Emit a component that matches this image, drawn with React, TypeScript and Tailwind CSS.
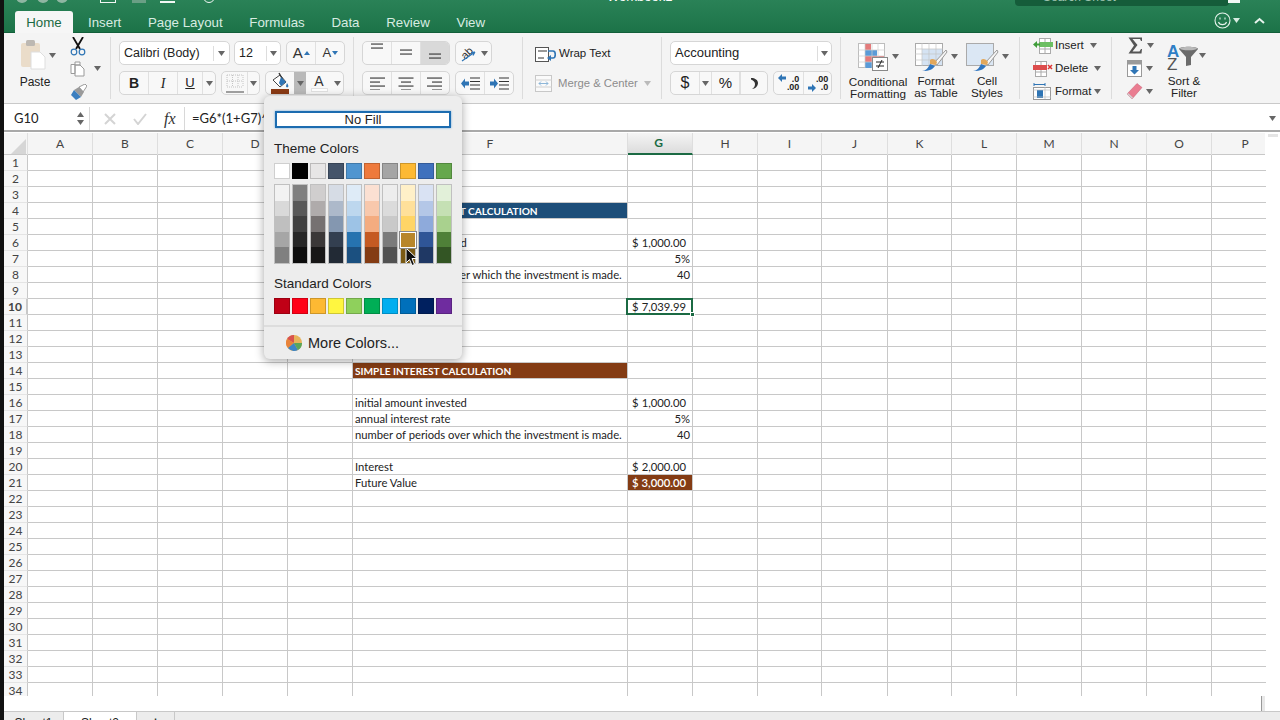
const ui = { fontFamily: '"Liberation Sans", Arial, sans-serif' };

const cols = ["A", "B", "C", "D", "E", "F", "G", "H", "I", "J", "K", "L", "M", "N", "O", "P"];

const themeTop = ["bg-[#ffffff]", "bg-[#000000]", "bg-[#e7e6e6]", "bg-[#44546a]", "bg-[#4f95d0]", "bg-[#ee7a3c]", "bg-[#a5a5a5]", "bg-[#fdb933]", "bg-[#3f71bd]", "bg-[#66a84d]"];
const shades = [
  ["bg-[#f2f2f2]", "bg-[#d9d9d9]", "bg-[#bfbfbf]", "bg-[#a6a6a6]", "bg-[#808080]"],
  ["bg-[#7f7f7f]", "bg-[#595959]", "bg-[#404040]", "bg-[#262626]", "bg-[#0d0d0d]"],
  ["bg-[#d0cece]", "bg-[#afabab]", "bg-[#767171]", "bg-[#3b3838]", "bg-[#181717]"],
  ["bg-[#d6dce5]", "bg-[#adb9ca]", "bg-[#8497b0]", "bg-[#333f50]", "bg-[#222a35]"],
  ["bg-[#deebf7]", "bg-[#bdd7ee]", "bg-[#9dc3e6]", "bg-[#2673b0]", "bg-[#1b5080]"],
  ["bg-[#fbe0d2]", "bg-[#f8c8ac]", "bg-[#f4ac80]", "bg-[#c55a22]", "bg-[#843c14]"],
  ["bg-[#ededed]", "bg-[#dbdbdb]", "bg-[#c9c9c9]", "bg-[#7b7b7b]", "bg-[#525252]"],
  ["bg-[#fff0c8]", "bg-[#ffe09a]", "bg-[#ffd566]", "bg-[#b8862a]", "bg-[#7a5a14]"],
  ["bg-[#d9e2f3]", "bg-[#b4c7e7]", "bg-[#8eaadb]", "bg-[#2f5597]", "bg-[#1f3864]"],
  ["bg-[#e2f0d9]", "bg-[#c5e0b4]", "bg-[#a9d18e]", "bg-[#4f8038]", "bg-[#335524]"],
];
const standard = ["bg-[#c00016]", "bg-[#ff0018]", "bg-[#fdb933]", "bg-[#fff640]", "bg-[#8fd05c]", "bg-[#00ae56]", "bg-[#00aeef]", "bg-[#0070bb]", "bg-[#00205f]", "bg-[#6f2c9f]"];

const Caret = ({ className = "" }: { className?: string }) => (
  <svg width="7" height="5" viewBox="0 0 7 5" className={`shrink-0 ${className}`}>
    <path d="M0 0h7L3.5 5z" fill="#666" />
  </svg>
);

const Box = ({ className = "", children }: { className?: string; children?: React.ReactNode }) => (
  <div className={`flex items-center h-[24px] rounded-[5px] border border-[#d6d6d6] bg-[#f8f8f8] overflow-hidden ${className}`}>{children}</div>
);

const Cell2 = ({ className = "", children }: { className?: string; children?: React.ReactNode }) => (
  <div className={`flex items-center justify-center h-full border-r border-[#e0e0e0] last:border-r-0 ${className}`}>{children}</div>
);

const Lines = ({ widths, align }: { widths: number[]; align: "l" | "c" | "r" }) => (
  <svg width="16" height="13" viewBox="0 0 16 13">
    {widths.map((w, i) => {
      const x = align === "l" ? 1 : align === "c" ? 8 - w / 2 : 15 - w;
      return <rect key={i} x={x} y={i * 4 + 0.5} width={w} height="1.1" fill="#333" />;
    })}
  </svg>
);

const Paste = () => (
  <svg width="26" height="32" viewBox="0 0 26 32">
    <rect x="1" y="4" width="19" height="24" rx="2" fill="#eadcc9" />
    <rect x="6" y="1" width="9" height="6" rx="1.5" fill="#bdb8b2" />
    <path d="M11 13h9l5 5v12H11z" fill="#fff" stroke="#dedede" />
  </svg>
);

const Scissors = () => (
  <svg width="16" height="19" viewBox="0 0 16 19">
    <path d="M3 0l7 12M13 0L6 12" stroke="#111" strokeWidth="1.8" fill="none" />
    <circle cx="4" cy="15" r="2.8" fill="none" stroke="#2f75b5" strokeWidth="1.2" />
    <circle cx="12" cy="15" r="2.8" fill="none" stroke="#2f75b5" strokeWidth="1.2" />
  </svg>
);

const Copy = () => (
  <svg width="15" height="16" viewBox="0 0 15 16">
    <path d="M5 1h5v3H5zM1 3.5h4v9H1zM5 4h5l4 4v7H5z" fill="#fff" stroke="#9a9a9a" />
  </svg>
);

const Brush = () => (
  <svg width="17" height="16" viewBox="0 0 17 16">
    <path d="M9 3l6-3 2 2-4 6z" fill="#fff" stroke="#9a9a9a" />
    <path d="M4 6l5-3 5 5-3 5z" fill="#9a9a9a" />
    <path d="M1 11l3-5 7 7-5 3z" fill="#3b7fc0" />
  </svg>
);

const FillBucket = () => (
  <svg width="20" height="22" viewBox="0 0 20 22">
    <path d="M3 8l7-5 6 7-6 5z" fill="#fff" stroke="#444" />
    <path d="M9 1l4 7" stroke="#333" strokeWidth="1.4" />
    <path d="M11 5l5 5-5 4-2-3z" fill="#2f75b5" />
    <path d="M17 11c1 2 2 3 1 4s-2 0-2-1z" fill="#2f75b5" />
    <rect x="1" y="17" width="18" height="5" fill="#8a3a14" />
  </svg>
);

const Borders = () => (
  <svg width="18" height="19" viewBox="0 0 18 19">
    <path d="M1 1h16M1 7h16M1 13h16M1 1v12M6.500 1v12M12 1v12M17 1v12" stroke="#c4c4c4" strokeDasharray="1 1" fill="none" />
    <path d="M0 18h18" stroke="#444" strokeWidth="1.2" />
  </svg>
);

const Orientation = () => (
  <svg width="18" height="18" viewBox="0 0 18 18">
    <text x="1" y="12" fontSize="11" fill="#333" transform="rotate(-45 8 9)" fontFamily="Liberation Sans">ab</text>
    <path d="M2 17l13-9M15 8l-4 .5M15 8l-2 3.500" stroke="#2f75b5" strokeWidth="1.2" fill="none" />
  </svg>
);

const Indent = ({ flip }: { flip?: boolean }) => (
  <svg width="19" height="13" viewBox="0 0 19 13">
    <path d="M9 1h10M9 4.500h10M9 8h10M9 12h10" stroke="#333" strokeWidth="1" />
    {flip ? <path d="M0 4.500h4V1.500l4 5-4 5v-3H0z" fill="#2f75b5" /> : <path d="M8 4.500H4V1.500l-4 5 4 5v-3h4z" fill="#2f75b5" />}
  </svg>
);

const WrapIcon = () => (
  <svg width="21" height="17" viewBox="0 0 21 17">
    <rect x="0.500" y="1.500" width="13" height="14" fill="#fff" stroke="#555" />
    <path d="M3 5h9M3 12h6" stroke="#333" />
    <path d="M13 5h5c3 0 3 7 0 7h-3" fill="none" stroke="#2f75b5" strokeWidth="1.6" />
    <path d="M16 9l-4 3 4 3z" fill="#2f75b5" />
  </svg>
);

const MergeIcon = () => (
  <svg width="17" height="17" viewBox="0 0 17 17">
    <rect x="0.500" y="0.500" width="16" height="16" fill="#fafafa" stroke="#c8c8c8" />
    <path d="M0 5h17M0 12h17" stroke="#d0d0d0" />
    <path d="M4 8.500h9M4 8.500l2-2M4 8.500l2 2M13 8.500l-2-2M13 8.500l-2 2" stroke="#8db6d8" fill="none" />
  </svg>
);

const Decimal = ({ top, bottom, arrowTop }: { top: string; bottom: string; arrowTop: boolean }) => (
  <div className="flex items-center">
    <svg width="9" height="20" viewBox="0 0 9 20">
      <path d={arrowTop ? "M0 5l4-4v2.500h4v3H4V9z" : "M9 15l-4-4v2.500H1v3h4V19z"} fill="#2f75b5" />
    </svg>
    <div className="flex flex-col text-[9px] leading-[8px] text-[#222] font-bold tracking-[-0.2px]" style={ui}>
      <span className="text-right">{top}</span>
      <span className="text-right">{bottom}</span>
    </div>
  </div>
);

const CondFmt = () => (
  <svg width="31" height="29" viewBox="0 0 31 29">
    <rect x="0.500" y="0.500" width="26" height="24" fill="#fff" stroke="#bdbdbd" />
    <rect x="7" y="1" width="6" height="6" fill="#e47b7b" />
    <rect x="7" y="7" width="12" height="6" fill="#5a9bd8" />
    <rect x="7" y="13" width="19" height="6" fill="#e47b7b" />
    <rect x="7" y="19" width="9" height="6" fill="#5a9bd8" />
    <path d="M7 0v25M14 0v25M20 0v25M0 7h27M0 13h27M0 19h27" stroke="#cfcfcf" strokeWidth="0.700" />
    <rect x="14.500" y="14.500" width="15" height="13" fill="#fff" stroke="#888" />
    <path d="M18 19h8M18 23h8M24 17l-4 8" stroke="#222" />
  </svg>
);

const TableBrush = ({ plain }: { plain?: boolean }) => (
  <svg width="33" height="28" viewBox="0 0 33 28">
    <rect x="0.500" y="0.500" width="27" height="22" fill={plain ? "#dbe7f4" : "#fff"} stroke="#aaa" />
    {!plain && <rect x="7" y="6" width="20" height="16" fill="#d5e3f3" />}
    {!plain && <path d="M7 0v23M14 0v23M21 0v23M0 6h28M0 11h28M0 17h28" stroke="#c4c4c4" strokeWidth="0.700" />}
    <path d="M31 7L19 20l3 2L32 9z" fill="#f7f7f7" stroke="#999" />
    <path d="M15 17c2-2 5-1 7 2l-1 3-6-1z" fill="#e2a75a" />
    <path d="M7 28c4 0 6-3 8-7l5 2c-2 3-5 5-13 5z" fill="#2f75c0" />
  </svg>
);

const Insert = () => (
  <svg width="20" height="16" viewBox="0 0 20 16">
    <rect x="6.500" y="0.500" width="11" height="15" fill="#fff" stroke="#aaa" />
    <path d="M12 0v16M6 11h12" stroke="#aaa" />
    <rect x="6" y="4" width="14" height="5" fill="#6cbf62" />
    <path d="M0 6.500L4 3v2.500h3v2H4V10z" fill="#3f9c3a" />
  </svg>
);

const Delete = () => (
  <svg width="20" height="16" viewBox="0 0 20 16">
    <rect x="2.500" y="0.500" width="11" height="15" fill="#fff" stroke="#aaa" />
    <path d="M8 0v16M2 11h12" stroke="#aaa" />
    <rect x="0" y="4" width="14" height="5" fill="#dc4c4c" />
    <path d="M15 4l4 4M19 4l-4 4" stroke="#d33" strokeWidth="1.500" />
  </svg>
);

const FormatIcon = () => (
  <svg width="18" height="17" viewBox="0 0 18 17">
    <path d="M1 1.500h11M1 0v3M12 0v3" stroke="#2f75b5" />
    <rect x="0.500" y="4.500" width="17" height="12" fill="#fff" stroke="#999" />
    <rect x="4" y="7" width="6" height="8" fill="#2f75b5" />
    <path d="M12 4v12M0 7h18M0 14h18" stroke="#bbb" strokeWidth="0.700" />
  </svg>
);

const Sigma = () => (
  <svg width="15" height="17" viewBox="0 0 15 17">
    <path d="M0.500 0.500h13.500v3.500h-1l-1-2H4.500l5 6-5 6.500h7l1.500-2.500h1l-0.500 4.500H0.500L6 8.500z" fill="#555" />
  </svg>
);

const FillDown = () => (
  <svg width="15" height="17" viewBox="0 0 15 17">
    <rect x="0.500" y="0.500" width="14" height="16" fill="#fff" stroke="#999" />
    <rect x="1" y="1" width="13" height="3.500" fill="#9a9a9a" />
    <path d="M5.500 6h4v4h2.500l-4.500 4.500L3 10h2.500z" fill="#2f75b5" />
  </svg>
);

const Eraser = () => (
  <svg width="17" height="17" viewBox="0 0 17 17">
    <path d="M1 11L11 0.500l5 4L6 16z" fill="#ea7d91" stroke="#c75a70" strokeWidth="0.500" />
    <path d="M1 11l5 5 1-1.500-5-4.500z" fill="#d2d2d2" />
  </svg>
);

const SortFilter = () => (
  <svg width="31" height="27" viewBox="0 0 31 27">
    <text x="0" y="13" fontSize="17" fontWeight="bold" fill="#2f7fc6" fontFamily="Liberation Sans" textLength="12">A</text>
    <text x="0" y="26" fontSize="17" fill="#555" fontFamily="Liberation Sans" textLength="11">Z</text>
    <path d="M12 5c0-3 19-3 19 0l-7 8v8l-5 1V13z" fill="#6b6b6b" />
    <ellipse cx="21.500" cy="4.500" rx="8.500" ry="1.800" fill="#b9b9b9" />
  </svg>
);

const Smiley = () => (
  <svg width="17" height="17" viewBox="0 0 17 17" fill="none" stroke="#e6f3ec" strokeWidth="1.100">
    <circle cx="8.500" cy="8.500" r="7.500" />
    <path d="M4.500 10c1 3.500 7 3.500 8 0" />
    <path d="M6 5.500v2M11 5.500v2" />
  </svg>
);

const Btn = ({ top, l1, l2, w }: { top: React.ReactNode; l1: string; l2: string; w: string }) => (
  <div className={`flex flex-col items-center shrink-0 ${w}`}>
    <div className="h-[33px] flex items-start justify-center gap-[3px]">
      {top}
      <Caret className="mt-[11px]" />
    </div>
    <div className="mt-[4px] text-[11.700px] leading-[12px] text-center text-[#222]">
      {l1}
      <br />
      {l2}
    </div>
  </div>
);

const CellBtn = ({ icon, label, mr }: { icon: React.ReactNode; label: string; mr: string }) => (
  <div className="flex items-center h-[23px] shrink-0">
    <div className="w-[22px] flex justify-start">{icon}</div>
    <span className="text-[11.500px] text-[#222]">{label}</span>
    <Caret className={mr} />
  </div>
);

const Ribbon = () => (
  <div className="flex h-[71px] bg-[#f4f4f4] border-b border-[#c9c9c9] py-[4px] text-[#222]" style={ui}>
    {/* clipboard */}
    <div className="w-[107px] h-full border-r border-[#dcdcdc] flex shrink-0">
      <div className="w-[60px] flex flex-col items-center pl-[8px] pt-[1px]">
        <div className="flex items-center h-[34px] gap-[3px]">
          <Paste />
          <Caret className="mt-[1px]" />
        </div>
        <span className="text-[12px] leading-[14px] mt-[3px] mr-[6px] text-[#222]">Paste</span>
      </div>
      <div className="flex flex-col items-start pl-[6px] -mt-[2px]">
        <div className="h-[22px] shrink-0 flex items-center">
          <Scissors />
        </div>
        <div className="h-[23px] shrink-0 flex items-center gap-[9px]">
          <Copy />
          <Caret />
        </div>
        <div className="h-[23px] shrink-0 flex items-center">
          <Brush />
        </div>
      </div>
    </div>

    {/* font */}
    <div className="w-[243px] h-full border-r border-[#dcdcdc] pl-[8px] pt-[4px] shrink-0 flex flex-col gap-[6px]">
      <div className="flex gap-[4px]">
        <Box className="w-[111px] bg-white pl-[4px]">
          <span className="text-[12.500px] flex-1">Calibri (Body)</span>
          <div className="w-[16px] h-[15px] border-l border-[#ddd] flex items-center justify-center">
            <Caret />
          </div>
        </Box>
        <Box className="w-[47px] bg-white pl-[4px]">
          <span className="text-[12.500px] flex-1">12</span>
          <div className="w-[14px] h-[15px] border-l border-[#ddd] flex items-center justify-center">
            <Caret />
          </div>
        </Box>
        <Box className="w-[59px] ml-[1px]">
          <Cell2 className="w-[30px] gap-[1px]">
            <span className="text-[15px] text-[#333]">A</span>
            <svg width="6" height="4" viewBox="0 0 6 4"><path d="M0 4h6L3 0z" fill="#2f75b5" /></svg>
          </Cell2>
          <Cell2 className="w-[28px] gap-[1px]">
            <span className="text-[13px] text-[#333]">A</span>
            <svg width="6" height="4" viewBox="0 0 6 4"><path d="M0 0h6L3 4z" fill="#2f75b5" /></svg>
          </Cell2>
        </Box>
      </div>
      <div className="flex gap-[5px]">
        <Box className="w-[97px]">
          <Cell2 className="w-[29px] font-bold text-[14px]">B</Cell2>
          <Cell2 className="w-[29px] italic text-[14px]" >
            <span style={{ fontFamily: '"Liberation Serif", serif' }}>I</span>
          </Cell2>
          <Cell2 className="w-[25px] text-[13px] underline">U</Cell2>
          <Cell2 className="w-[12px]"><Caret /></Cell2>
        </Box>
        <Box className="w-[39px]">
          <Cell2 className="w-[26px]"><Borders /></Cell2>
          <Cell2 className="w-[11px]"><Caret /></Cell2>
        </Box>
        <Box className="w-[79px]">
          <Cell2 className="w-[28px] border-r-0"><FillBucket /></Cell2>
          <div className="w-[12px] h-full bg-[#b9b9b9] flex items-center justify-center"><Caret /></div>
          <Cell2 className="w-[26px] border-r-0 flex-col">
            <span className="text-[14px] leading-[14px] text-[#333]">A</span>
            <span className="w-[17px] h-[4px] bg-white border border-[#e3e3e3]" />
          </Cell2>
          <div className="flex-1 flex justify-center"><Caret /></div>
        </Box>
      </div>
    </div>

    {/* alignment */}
    <div className="w-[169px] h-full border-r border-[#dcdcdc] pl-[8px] pt-[4px] shrink-0 flex flex-col gap-[6px]">
      <div className="flex gap-[5px]">
        <Box className="w-[88px]">
          <Cell2 className="w-[29px] pb-[8px]"><Lines widths={[12, 12]} align="c" /></Cell2>
          <Cell2 className="w-[29px] pt-[4px]"><Lines widths={[12, 12]} align="c" /></Cell2>
          <div className="flex-1 h-full bg-[#d9d9d9] flex items-center justify-center pt-[13px]"><Lines widths={[12, 12]} align="c" /></div>
        </Box>
        <Box className="w-[37px] justify-center gap-[3px]">
          <Orientation />
          <Caret />
        </Box>
      </div>
      <div className="flex gap-[5px]">
        <Box className="w-[88px]">
          <Cell2 className="w-[29px]"><Lines widths={[15, 10, 15, 10]} align="l" /></Cell2>
          <Cell2 className="w-[29px]"><Lines widths={[15, 10, 15, 10]} align="c" /></Cell2>
          <Cell2 className="flex-1"><Lines widths={[15, 10, 15, 10]} align="r" /></Cell2>
        </Box>
        <Box className="w-[59px]">
          <Cell2 className="w-[29px]"><Indent /></Cell2>
          <Cell2 className="flex-1"><Indent flip /></Cell2>
        </Box>
      </div>
    </div>

    {/* wrap, merge */}
    <div className="w-[139px] h-full border-r border-[#dcdcdc] pl-[12px] pt-[5px] shrink-0 flex flex-col gap-[5px]">
      <div className="flex items-center h-[24px] gap-[3px]">
        <WrapIcon />
        <span className="text-[11.500px]">Wrap Text</span>
      </div>
      <div className="flex items-center h-[24px] text-[#8c8c8c]">
        <MergeIcon />
        <span className="text-[11.300px] ml-[6px]">Merge &amp; Center</span>
        <Caret className="ml-[6px] opacity-40" />
      </div>
    </div>

    {/* number */}
    <div className="w-[179px] h-full border-r border-[#dcdcdc] pl-[8px] pt-[4px] shrink-0 flex flex-col gap-[6px]">
      <Box className="w-[162px] bg-white pl-[4px]">
        <span className="text-[13px] flex-1">Accounting</span>
        <div className="w-[14px] h-[15px] border-l border-[#ddd] flex items-center justify-center">
          <Caret />
        </div>
      </Box>
      <div className="flex gap-[5px]">
        <Box className="w-[98px]">
          <div className="w-[28px] text-center text-[16px]">$</div>
          <Cell2 className="w-[12px] border-l border-r-0 h-[15px]"><Caret /></Cell2>
          <Cell2 className="w-[29px] border-l text-[15px]">%</Cell2>
          <Cell2 className="flex-1 border-l">
            <svg width="7" height="11" viewBox="0 0 7 11"><path d="M0 0c4 0 7 2 7 5s-3 6-6 6c2-1 3-3 3-5S2 2 0 1.500z" fill="#333" /></svg>
          </Cell2>
        </Box>
        <Box className="w-[59px]">
          <Cell2 className="w-[30px]"><Decimal top=".0" bottom=".00" arrowTop /></Cell2>
          <Cell2 className="flex-1"><Decimal top=".00" bottom=".0" arrowTop={false} /></Cell2>
        </Box>
      </div>
    </div>

    {/* styles */}
    <div className="w-[179px] h-full border-r border-[#dcdcdc] pl-[6px] pt-[6px] shrink-0 flex">
      <Btn top={<CondFmt />} l1="Conditional" l2="Formatting" w="w-[62px]" />
      <Btn top={<TableBrush />} l1="Format" l2="as Table" w="w-[54px]" />
      <Btn top={<TableBrush plain />} l1="Cell" l2="Styles" w="w-[48px]" />
    </div>

    {/* cells */}
    <div className="w-[92px] h-full border-r border-[#dcdcdc] pl-[13px] shrink-0">
      <div className="-mt-[3px] flex flex-col">
        <CellBtn icon={<Insert />} label="Insert" mr="ml-[6px]" />
        <CellBtn icon={<Delete />} label="Delete" mr="ml-[6px]" />
        <CellBtn icon={<FormatIcon />} label="Format" mr="ml-[3px]" />
      </div>
    </div>

    {/* editing */}
    <div className="flex-1 h-full pl-[14px] flex">
      <div className="flex flex-col w-[38px] -mt-[3px]">
        <div className="h-[23px] shrink-0 flex items-center gap-[4px] pl-[2px]"><Sigma /><Caret /></div>
        <div className="h-[23px] shrink-0 flex items-center gap-[4px] pl-[1px]"><FillDown /><Caret /></div>
        <div className="h-[23px] shrink-0 flex items-center gap-[3px]"><Eraser /><Caret /></div>
      </div>
      <div className="flex flex-col items-center w-[40px] pt-[7px]">
        <div className="h-[29px] self-start ml-[3px] flex items-start gap-[1px]"><SortFilter /><Caret className="mt-[9px]" /></div>
        <div className="mt-[4px] text-[11.700px] leading-[12px] text-center whitespace-nowrap">Sort &amp;<br />Filter</div>
      </div>
    </div>
  </div>
);

const Title = () => (
  <div className="h-[33px] shrink-0 bg-gradient-to-b from-[#2a8257] to-[#1c7348] border-b border-[#125f3a]" style={ui}>
    <div className="flex h-[11px] overflow-hidden items-start">
      <div className="w-[603px] shrink-0 flex items-start pl-[12px] -mt-[9px]">
        <span className="w-[12px] h-[12px] rounded-full bg-[#8fb6a2]" />
        <span className="w-[12px] h-[12px] rounded-full bg-[#8fb6a2] ml-[9px]" />
        <span className="w-[12px] h-[12px] rounded-full bg-[#8fb6a2] ml-[7px]" />
        <span className="w-[16px] h-[12px] border border-[#f2f7f4] ml-[32px]" />
        <span className="w-[14px] h-[12px] bg-[#6a9f85] ml-[16px]" />
        <span className="w-[15px] h-[12px] border-b-2 border-[#f2f7f4] ml-[14px]" />
        <span className="w-[12px] h-[12px] rounded-full border border-[#f2f7f4] ml-[28px]" />
      </div>
      <span className="w-[70px] shrink-0 text-[13px] leading-[14px] -mt-[10px] text-white whitespace-nowrap">Workbook1</span>
      <div className="ml-[338px] w-[214px] h-[6px] bg-[#155c3a] rounded-b-[4px] overflow-hidden text-[12px] leading-[12px] text-[#9fc4b1] pl-[28px]">
        <div className="-mt-[9px]">Search Sheet</div>
      </div>
      <span className="w-[12px] h-[3px] bg-[#f2f7f4] ml-[-1px]" />
    </div>
    <div className="flex h-[22px] items-end text-[13.300px] text-[#d8ece2] font-medium">
      <div className="ml-[11px] w-[58px] h-[22px] rounded-t-[3px] bg-[#f6f6f6] text-[#1b6a43] flex items-center justify-center pt-[2px]">Home</div>
      <div className="flex gap-[26.700px] h-[22px] items-center ml-[15px] pt-[2px]">
        <span>Insert</span>
        <span>Page Layout</span>
        <span>Formulas</span>
        <span>Data</span>
        <span>Review</span>
        <span>View</span>
      </div>
      <div className="ml-auto h-[22px] pr-[15px] pb-[3px] flex items-center gap-[2px]">
        <Smiley />
        <svg width="7" height="5" viewBox="0 0 7 5"><path d="M0 0h7L3.5 5z" fill="#d8ece2" /></svg>
        <svg width="11" height="7" viewBox="0 0 11 7" className="ml-[12px]"><path d="M1 6l4.500-4 4.500 4" stroke="#e6f3ec" strokeWidth="2" fill="none" /></svg>
      </div>
    </div>
  </div>
);

const Formula = () => (
  <div className="h-[26px] shrink-0 flex items-center bg-white pt-[3px]" style={{ fontFamily: 'Lato, "Liberation Sans", sans-serif' }}>
    <div className="w-[86px] h-full flex items-center border-r border-[#d8d8d8] shrink-0 pl-[10px] pr-[5px] justify-between">
      <span className="text-[13px] text-[#222]">G10</span>
      <div className="flex flex-col gap-[3px]">
        <svg width="7" height="5" viewBox="0 0 7 5"><path d="M0 5h7L3.500 0z" fill="#666" /></svg>
        <svg width="7" height="5" viewBox="0 0 7 5"><path d="M0 0h7L3.500 5z" fill="#666" /></svg>
      </div>
    </div>
    <svg width="12" height="12" viewBox="0 0 12 12" className="ml-[14px]"><path d="M1 1l10 10M11 1L1 11" stroke="#d4d4d4" strokeWidth="2" /></svg>
    <svg width="14" height="12" viewBox="0 0 14 12" className="ml-[17px]"><path d="M1 6l4 5 8-10" stroke="#d4d4d4" strokeWidth="2" fill="none" /></svg>
    <span className="ml-[17px] w-[21px] text-[16px] italic text-[#333] border-r border-[#d8d8d8]" style={{ fontFamily: '"Liberation Serif", serif' }}>fx</span>
    <span className="ml-[7px] text-[13px] text-[#222] whitespace-nowrap">=G6*(1+G7)^G8</span>
    <Caret className="ml-auto mr-[4px]" />
  </div>
);

type Row = { f?: string; g?: string; pct?: string; fClass?: string; gClass?: string };
const rowsData: Record<number, Row> = {
  4: { f: "COMPOUND INTEREST CALCULATION", fClass: "bg-[#1d4e79] text-white font-bold text-[10.150px] leading-[16px]" },
  6: { f: "initial amount invested", g: "1,000.00" },
  7: { f: "annual interest rate", pct: "5%" },
  8: { f: "number of periods over which the investment is made.", pct: "40" },
  10: { f: "Future Value", g: "7,039.99" },
  14: { f: "SIMPLE INTEREST CALCULATION", fClass: "bg-[#843c14] text-white font-bold text-[10.150px] leading-[16px]" },
  16: { f: "initial amount invested", g: "1,000.00" },
  17: { f: "annual interest rate", pct: "5%" },
  18: { f: "number of periods over which the investment is made.", pct: "40" },
  20: { f: "Interest", g: "2,000.00" },
  21: { f: "Future Value", g: "3,000.00", gClass: "bg-[#843c14] text-white font-semibold" },
};

const gridCols = "grid grid-cols-[24px_65px_65px_65px_65px_65px_275px_65px_65px_64px_66px_64px_65px_65px_65px_65px_54px]";

const Sheet = () => {
  const rows = Array.from({ length: 34 }, (_, i) => i + 1);
  return (
    <div className="flex-1 min-h-0 overflow-hidden bg-white" style={{ fontFamily: 'Lato, "Liberation Sans", sans-serif' }}>
      <div className="h-[2px] bg-[#a9a9a9]" />
      <div className="flex h-[23px] mt-px">
        <div className={`${gridCols} w-[1261px] h-[22px] bg-[#f5f5f5] border-b border-[#c8c8c8] text-[12px] text-[#444]`}>
          <div className="border-r border-[#e0e0e0] flex items-end justify-end">
            <svg width="15" height="15" viewBox="0 0 15 15" className="mb-[1px] mr-[1px]"><path d="M15 0v15H0z" fill="#d6d6d6" /></svg>
          </div>
          {cols.map((c) => (
            <div
              key={c}
              className={`flex items-center justify-center border-r last:border-r-0 border-[#dedede] ${
                c === "G" ? "bg-gradient-to-b from-[#f5f5f5] to-[#dcdcdc] border-b-2 border-b-[#1b6a43] text-[#1b6a43] font-bold h-[22px] pr-[3px]" : ""
              } ${c === "P" ? "pl-[12px]" : ""}`}
            >
              {c}
            </div>
          ))}
        </div>
        <div className="flex-1 flex justify-center pt-[1px]">
          <div className="w-[10px] h-[3px] bg-[#e4e4e4]" />
        </div>
      </div>
      <div className="-mt-[1px]">
        {rows.map((r) => {
          const d = rowsData[r] ?? {};
          return (
            <div key={r} className={`${gridCols} w-[1261px] h-[16px] text-[11.250px] leading-[15px] text-[#222]`}>
              <div
                className={`h-[16px] text-[12px] leading-[16px] text-center bg-[#f7f7f7] border-r border-b border-r-[#c8c8c8] border-b-[#e4e4e4] text-[#444] ${
                  r === 10 ? "border-r-2 border-r-[#1b6a43] font-bold text-[#1b6a43]" : ""
                }`}
              >
                {r}
              </div>
              {cols.map((c) => {
                if (c === "F" && d.f) {
                  return (
                    <div key={c} className={`h-[16px] pl-[2px] border-r border-b border-[#c8c8c8] whitespace-nowrap overflow-hidden ${d.fClass ?? ""}`}>
                      {d.f}
                    </div>
                  );
                }
                if (c === "G" && (d.g || d.pct)) {
                  const sel = r === 10;
                  return (
                    <div key={c} className={`relative h-[16px] border-r border-b border-[#c8c8c8] flex justify-between pl-[4px] ${d.pct ? "pr-[2px]" : "pr-[6px]"} ${d.gClass ?? ""}`}>
                      {d.g && <span>$</span>}
                      {d.pct && <span />}
                      <span>{d.g ?? d.pct}</span>
                      {sel && (
                        <>
                          <div className="absolute -left-[2px] -top-[1px] -right-px -bottom-px border-2 border-[#1b6a43] pointer-events-none" />
                          <div className="absolute -right-[3px] -bottom-[3px] w-[5px] h-[5px] bg-[#1b6a43] border border-white" />
                        </>
                      )}
                    </div>
                  );
                }
                return <div key={c} className={`h-[16px] border-b border-[#c8c8c8] ${c === "P" ? "" : "border-r"}`} />;
              })}
            </div>
          );
        })}
      </div>
    </div>
  );
};

const Swatch = ({ color, className = "" }: { color: string; className?: string }) => (
  <div className={`w-[16px] h-[16px] ${color} border border-[#00000030] ${className}`} />
);

const Picker = () => (
  <div className="absolute left-[260px] top-[96px] w-[198px] h-[263px] rounded-[6px] bg-[#ededed] shadow-[0_2px_10px_rgba(0,0,0,0.35)] px-[10px]" style={ui}>
    <div className="mt-[15px] ml-px w-[176px] h-[17px] bg-white border-2 border-[#1c6cb0] shadow-[0_0_2px_#6aa8dc] flex items-center justify-center text-[13px] text-[#222]">
      No Fill
    </div>
    <div className="mt-[13px] text-[13.500px] leading-[16px] text-[#222]">Theme Colors</div>
    <div className="mt-[6px] flex gap-[2px]">
      {themeTop.map((c) => (
        <Swatch key={c} color={c} />
      ))}
    </div>
    <div className="mt-[5px] flex gap-[2px]">
      {shades.map((col, i) => (
        <div key={i} className="w-[16px] h-[80px] flex flex-col border border-[#00000030]">
          {col.map((c, j) => (
            <div key={c} className={`${c} ${i === 7 && j === 3 ? "relative z-10 h-[16px] w-[16px] -mx-px shrink-0 border border-white outline outline-[#888]" : "flex-1"}`} />
          ))}
        </div>
      ))}
    </div>
    <div className="mt-[12px] text-[13.500px] leading-[16px] text-[#222]">Standard Colors</div>
    <div className="mt-[6px] flex gap-[2px]">
      {standard.map((c) => (
        <Swatch key={c} color={c} />
      ))}
    </div>
    <div className="mt-[11px] -mx-[10px] h-[2px] bg-[#dddddd]" />
    <div className="mt-[8px] ml-[12px] flex items-center gap-[6px]">
      <svg width="16" height="16" viewBox="0 0 16 16">
        <circle cx="8" cy="8" r="8" fill="#e7b35a" />
        <path d="M8 8V0a8 8 0 0 0-7 4z" fill="#d9534f" />
        <path d="M8 8L1 4a8 8 0 0 0 1 9z" fill="#e8833a" />
        <path d="M8 8L2 13a8 8 0 0 0 10 2z" fill="#3d85c6" />
        <path d="M8 8l4 7a8 8 0 0 0 4-7z" fill="#5aa65a" />
      </svg>
      <span className="text-[14.500px] leading-[16px] text-[#222]">More Colors...</span>
    </div>
  </div>
);

const Cursor = () => (
  <svg width="13" height="21" viewBox="0 0 13 21" className="absolute left-[401px] top-[247px]">
    <path d="M1 1v15l3.500-3.500 2.500 6 2.500-1-2.500-6H12z" fill="#111" stroke="#fff" strokeWidth="1" />
  </svg>
);

const Footer = () => (
  <>
    <div className="h-[15px] shrink-0 bg-white flex justify-end pr-[15px]">
      <div className="w-[4px] h-[15px] border-l border-[#999] bg-[#e8e8e8]" />
    </div>
    <div className="h-[9px] shrink-0 bg-[#ececec] border-t border-[#c8c8c8] flex text-[12px] leading-[14px] text-[#222] overflow-hidden" style={ui}>
      <div className="w-[60px] border-r border-[#c8c8c8] text-center pt-[4px]">Sheet1</div>
      <div className="w-[73px] bg-white border-r border-[#c8c8c8] text-center font-medium -mt-px pt-[5px]">Sheet2</div>
      <div className="w-[38px] border-r border-[#c8c8c8] text-center font-bold pt-[3px]">+</div>
    </div>
  </>
);

export default function App() {
  return (
    <div className="relative flex w-[1280px] h-[720px] overflow-hidden bg-[#111]">
      <div className="w-[4px] shrink-0" />
      <div className="relative w-[1276px] flex flex-col bg-white">
        <Title />
        <Ribbon />
        <Formula />
        <Sheet />
        <Footer />
        <Picker />
        <Cursor />
      </div>
    </div>
  );
}
